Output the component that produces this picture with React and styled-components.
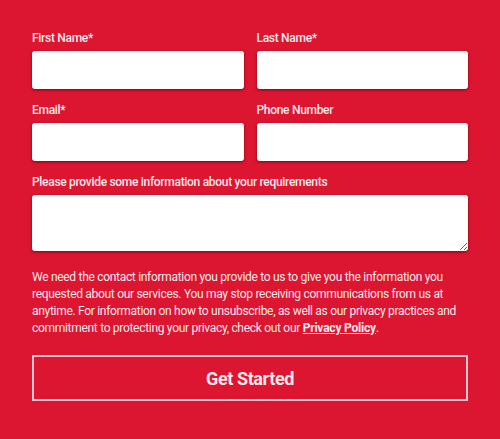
import React from "react";
import styled, { createGlobalStyle } from "styled-components";

const GlobalStyle = createGlobalStyle`
  html, body {
    margin: 0;
    padding: 0;
    background: #dc1530;
  }
  * {
    box-sizing: border-box;
  }
`;

const Form = styled.form`
  background: #dc1530;
  min-height: 439px;
  padding: 30px 32px 0;
  font-family: Roboto, "Liberation Sans", sans-serif;
  color: #fde9ec;
`;

const Row = styled.div`
  display: grid;
  grid-template-columns: ${({ $cols }) =>
    $cols === 2 ? "minmax(0, 1fr) minmax(0, 1fr)" : "minmax(0, 1fr)"};
  column-gap: 13px;
  margin-bottom: 13px;
`;

const Field = styled.div`
  display: flex;
  flex-direction: column;
  min-width: 0;
`;

const Label = styled.label`
  font-size: 12px;
  font-weight: 500;
  letter-spacing: -0.3px;
  line-height: 16px;
  margin-bottom: 5px;
`;

const Input = styled.input`
  width: 100%;
  height: 38px;
  border: none;
  border-radius: 3px;
  background: #fff;
  box-shadow: 0 1px 3px rgba(60, 0, 0, 0.6);
  padding: 0 10px;
  font: inherit;
  outline: none;
`;

const TextArea = styled.textarea`
  display: block;
  width: 100%;
  height: 56px;
  border: none;
  border-radius: 3px;
  background: #fff;
  box-shadow: 0 1px 3px rgba(60, 0, 0, 0.6);
  padding: 8px 10px;
  font: inherit;
  outline: none;
  resize: vertical;
`;

const Notice = styled.p`
  margin: 18px 0 0;
  font-size: 12px;
  letter-spacing: -0.3px;
  line-height: 17px;
`;

const PolicyLink = styled.a`
  color: inherit;
  font-weight: 700;
  letter-spacing: -0.2px;
  text-decoration: underline;
`;

const SubmitButton = styled.button`
  display: block;
  width: 100%;
  height: 46px;
  margin-top: 18px;
  background: transparent;
  border: 2px solid #fdc6cf;
  color: #fde9ec;
  font-family: Roboto, "Liberation Sans", sans-serif;
  font-size: 18px;
  font-weight: 700;
  letter-spacing: -0.4px;
  cursor: pointer;
`;

const App = () => {
  return (
    <>
      <GlobalStyle />
      <Form onSubmit={(e) => e.preventDefault()}>
        <Row $cols={2}>
          <Field>
            <Label>First Name*</Label>
            <Input type="text" />
          </Field>
          <Field>
            <Label>Last Name*</Label>
            <Input type="text" />
          </Field>
        </Row>
        <Row $cols={2}>
          <Field>
            <Label>Email*</Label>
            <Input type="email" />
          </Field>
          <Field>
            <Label>Phone Number</Label>
            <Input type="tel" />
          </Field>
        </Row>
        <Row>
          <Field>
            <Label>Please provide some information about your requirements</Label>
            <TextArea />
          </Field>
        </Row>
        <Notice>
          We need the contact information you provide to us to give you the
          information you requested about our services. You may stop receiving
          communications from us at anytime. For information on how to
          unsubscribe, as well as our privacy practices and commitment to
          protecting your privacy, check out our{" "}
          <PolicyLink href="#">Privacy Policy</PolicyLink>.
        </Notice>
        <SubmitButton type="submit">Get Started</SubmitButton>
      </Form>
    </>
  );
};

export default App;
